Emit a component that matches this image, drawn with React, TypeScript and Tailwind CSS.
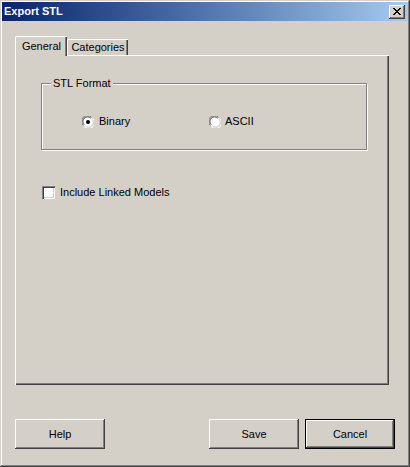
import React from "react";

const raised =
  "shadow-[inset_-1px_-1px_0_#404040,inset_1px_1px_0_#ffffff,inset_-2px_-2px_0_#808080,inset_2px_2px_0_#d4d0c8]";

function Radio({ checked }: { checked?: boolean }) {
  return (
    <svg width="12" height="12" viewBox="0 0 12 12" className="shrink-0">
      <circle cx="6" cy="6" r="5.5" fill="#ffffff" />
      <path d="M1.2 9.5 A5.5 5.5 0 0 1 9.5 1.2" stroke="#808080" strokeWidth="1" fill="none" />
      <path d="M2.2 8.8 A4.5 4.5 0 0 1 8.8 2.2" stroke="#404040" strokeWidth="1" fill="none" />
      <path d="M10.8 2.5 A5.5 5.5 0 0 1 2.5 10.8" stroke="#ffffff" strokeWidth="1" fill="none" />
      <path d="M9.8 3.2 A4.5 4.5 0 0 1 3.2 9.8" stroke="#d4d0c8" strokeWidth="1" fill="none" />
      {checked && <circle cx="6" cy="6" r="2" fill="#000000" />}
    </svg>
  );
}

function Btn({ label, def }: { label: string; def?: boolean }) {
  return (
    <div
      className={`w-[90px] h-[30px] flex items-center justify-center bg-[#d4d0c8] text-[11px] text-black ${
        def ? "border border-black" : ""
      } ${raised}`}
    >
      {label}
    </div>
  );
}

export default function App() {
  return (
    <div
      className={`w-[410px] h-[467px] bg-[#d4d0c8] p-[2px] flex flex-col font-['Liberation_Sans',Arial,sans-serif] text-[11px] leading-[13px] text-black shadow-[inset_-1px_-1px_0_#404040,inset_1px_1px_0_#d4d0c8,inset_-2px_-2px_0_#808080,inset_2px_2px_0_#ffffff]`}
    >
      {/* Title bar */}
      <div className="h-[19px] flex items-center justify-between bg-linear-to-r from-[#0a246a] to-[#a6caf0] pl-[2px] pr-[3px]">
        <span className="text-white font-bold text-[11px]">Export STL</span>
        <div className={`w-[16px] h-[14px] bg-[#d4d0c8] flex items-center justify-center ${raised}`}>
          <svg width="8" height="7" viewBox="0 0 8 7" shapeRendering="crispEdges">
            <path d="M0 0H2V1H3V2H5V1H6V0H8V1H7V2H6V3H5V4H6V5H7V6H8V7H6V6H5V5H3V6H2V7H0V6H1V5H2V4H3V3H2V2H1V1H0Z" fill="#000" />
          </svg>
        </div>
      </div>

      {/* Tabs */}
      <div className="ml-[13px] mt-[15px] flex items-end h-[20px] relative z-10">
        <div className="w-[52px] h-[20px] border-l border-t border-white rounded-tl-[2px] bg-[#d4d0c8] shadow-[inset_-1px_0_0_#404040,inset_-2px_0_0_#808080] flex items-start justify-center pt-[3px]">
          General
        </div>
        <div className="w-[61px] h-[16px] mb-[1px] border-l border-t border-white rounded-tl-[2px] bg-[#d4d0c8] shadow-[inset_-1px_0_0_#404040,inset_-2px_0_0_#808080] flex items-start justify-center pt-[1px]">
          Categories
        </div>
      </div>

      {/* Panel */}
      <div className="ml-[13px] mt-[-1px] w-[374px] h-[330px] border-l border-t border-white shadow-[inset_-1px_-1px_0_#404040,inset_-2px_-2px_0_#808080] flex flex-col">
        {/* Group box */}
        <div className="ml-[25px] mt-[27px] w-[326px] h-[67px] relative border border-[#808080] shadow-[1px_1px_0_#ffffff,inset_1px_1px_0_#ffffff] pl-[40px] pt-[31px]">
          <span className="absolute left-[9px] top-[-7px] px-[2px] bg-[#d4d0c8]">STL Format</span>
          <div className="flex items-center">
            <div className="w-[127px] flex items-center gap-[5px]">
              <Radio checked />
              <span>Binary</span>
            </div>
            <div className="flex items-center gap-[4px]">
              <Radio />
              <span>ASCII</span>
            </div>
          </div>
        </div>

        {/* Checkbox */}
        <div className="ml-[26px] mt-[36px] flex items-center gap-[5px]">
          <div className="w-[13px] h-[13px] bg-white shadow-[inset_1px_1px_0_#808080,inset_2px_2px_0_#404040,inset_-1px_-1px_0_#ffffff,inset_-2px_-2px_0_#d4d0c8]" />
          <span>Include Linked Models</span>
        </div>
      </div>

      {/* Buttons */}
      <div className="mt-[34px] mx-[13px] flex items-center">
        <Btn label="Help" />
        <div className="flex-1" />
        <div className="flex gap-[6px]">
          <Btn label="Save" />
          <Btn label="Cancel" def />
        </div>
      </div>
    </div>
  );
}
